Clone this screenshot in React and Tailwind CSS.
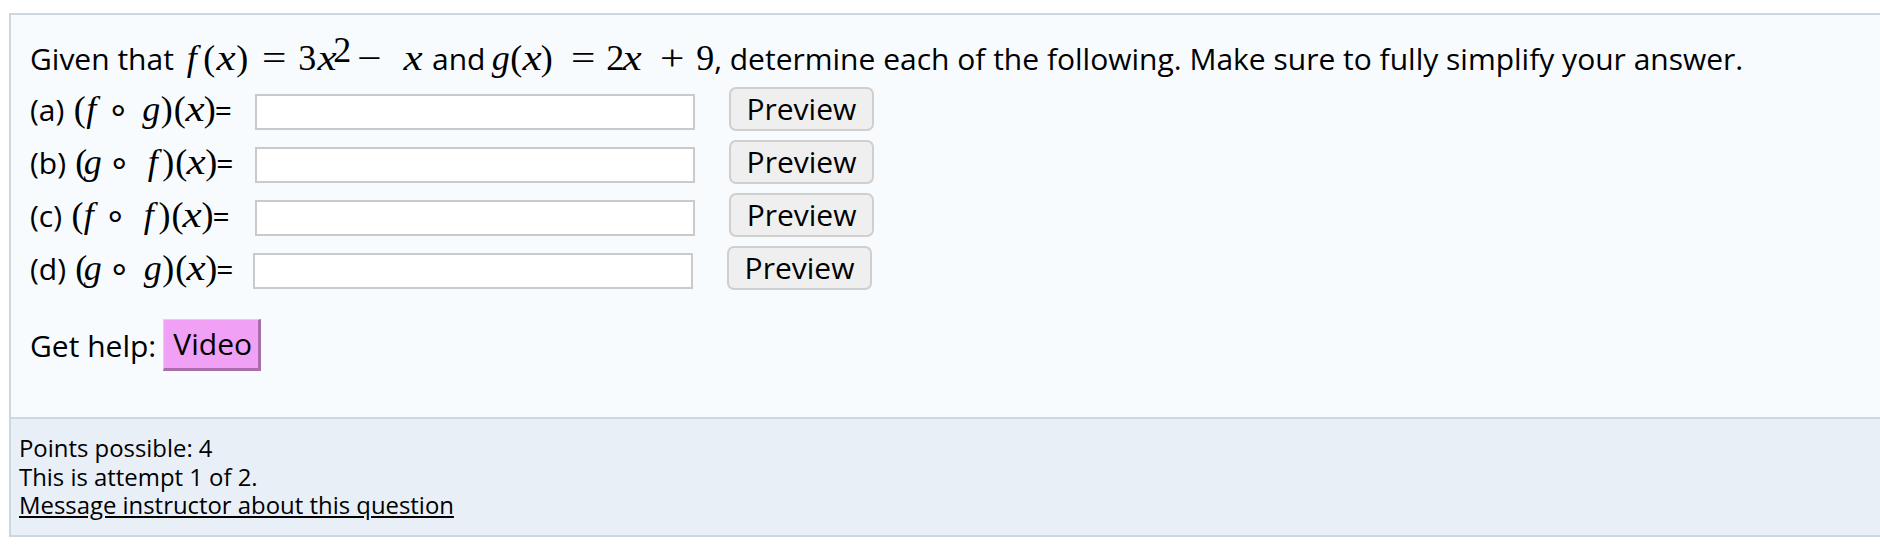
import React from "react";

function G({ c, cls = "", inner = "", italic = false }) {
  return (
    <span className={"inline-flex justify-center " + cls}>
      <span
        className={
          "inline-block font-['Liberation_Serif',serif] text-[36px] leading-none " +
          (italic ? "italic " : "not-italic ") +
          inner
        }
      >
        {c}
      </span>
    </span>
  );
}

function RowMath({ a, b }) {
  return (
    <>
      <G c="(" cls="ml-[4px] w-[7px]" />
      <G c={a} italic cls="ml-[1px] w-[14px]" />
      <G c="∘" cls="ml-[15px] w-[10px]" inner="font-['DejaVu_Sans',sans-serif] text-[34px]" />
      <G c={b} italic cls="ml-[20.5px] w-[15px]" />
      <G c=")" cls="ml-[4px] w-[8px]" />
      <G c="(" cls="ml-[5px] w-[8px]" />
      <G c="x" italic cls="ml-[2px] w-[18px]" inner="scale-x-[1.2]" />
      <G c=")" cls="ml-[2px] w-[8px]" />
    </>
  );
}

function Row({ label, a, b, inputMl }) {
  return (
    <div className="flex items-center h-[44px]">
      <span className="whitespace-nowrap">
        {label} <RowMath a={a} b={b} />
        <span className="ml-[1px]">=</span>
      </span>
      <input
        type="text"
        aria-label={label}
        className={inputMl + " mt-[6px] w-[440px] h-[36px] bg-white border-2 border-[#cacaca] outline-none"}
      />
      <button className="ml-[34px] h-[44px] w-[145px] bg-[#efefef] border-2 border-[#cfcfcf] rounded-[7px] text-[30px] leading-none text-black text-center font-['Open_Sans',sans-serif]">
        Preview
      </button>
    </div>
  );
}

export default function App() {
  return (
    <div className="w-[1880px] h-[554px] bg-white overflow-hidden font-['Open_Sans',sans-serif] text-black">
      <div className="mt-[13px] ml-[9px] w-[1900px] border-2 border-[#cdd7e1]">
        <div className="bg-[#f7fbfe] pt-[19px] pl-[19px] pb-[46px]">
          <div className="flex items-center h-[44px] text-[30px] whitespace-nowrap">
            <span>
              Given that{" "}
              <G c="f" italic cls="ml-[3px] w-[14px]" />
              <G c="(" cls="ml-[6.5px] w-[8px]" />
              <G c="x" italic cls="ml-[4px] w-[18px]" inner="scale-x-[1.2]" />
              <G c=")" cls="ml-[3px] w-[8px]" />
              <G c="=" cls="ml-[17px] w-[22px]" inner="scale-x-[1.2]" />
              <G c="3" cls="ml-[16px] w-[12px]" />
              <G c="x" italic cls="ml-[4.5px] w-[18px]" inner="scale-x-[1.2]" />
              <G c="2" cls="ml-[1.5px] w-[10px] align-[8px]" inner="text-[25px]" />
              <G c="−" cls="ml-[11px] w-[22px]" inner="scale-x-[1.2]" />
              <G c="x" italic cls="ml-[24px] w-[18px] mr-[2px]" inner="scale-x-[1.2]" />{" "}
              and{" "}
              <G c="g" italic cls="w-[15px]" />
              <G c="(" cls="ml-[4px] w-[8px]" />
              <G c="x" italic cls="ml-[2.5px] w-[18px]" inner="scale-x-[1.2]" />
              <G c=")" cls="ml-[2px] w-[8px]" />
              <G c="=" cls="ml-[21.5px] w-[22px]" inner="scale-x-[1.2]" />
              <G c="2" cls="ml-[15px] w-[12px]" />
              <G c="x" italic cls="ml-[1.5px] w-[18px]" inner="scale-x-[1.2]" />
              <G c="+" cls="ml-[20.5px] w-[22px]" inner="scale-x-[1.2]" />
              <G c="9" cls="ml-[16px] w-[12px] mr-[3px]" />
              , determine each of the following. Make sure to fully simplify your answer.
            </span>
          </div>
          <div className="mt-[9px] flex flex-col gap-[9px] text-[30px]">
            <Row label="(a)" a="f" b="g" inputMl="ml-[23px]" />
            <Row label="(b)" a="g" b="f" inputMl="ml-[21.5px]" />
            <Row label="(c)" a="f" b="f" inputMl="ml-[25.5px]" />
            <Row label="(d)" a="g" b="g" inputMl="ml-[19.5px]" />
          </div>
          <div className="mt-[29px] flex items-center h-[52px] text-[30px]">
            <span>Get help:</span>
            <button className="ml-[7px] h-[52px] w-[98px] pl-[3px] bg-[#f0a1f6] border-t border-l border-t-[#f6c0f8] border-l-[#f6c0f8] border-b-[3px] border-r-[3px] border-b-[#a96ea9] border-r-[#a96ea9] text-[30px] leading-none text-black text-center font-['Open_Sans',sans-serif]">
              Video
            </button>
          </div>
        </div>
        <div className="bg-[#e9eff7] border-t-2 border-[#cdd7e1] pt-[15px] pb-[15px] pl-[8px] text-[23.9px] leading-[28.5px]">
          <div>Points possible: 4</div>
          <div>This is attempt 1 of 2.</div>
          <div>
            <a href="#" className="underline text-black">Message instructor about this question</a>
          </div>
        </div>
      </div>
    </div>
  );
}
